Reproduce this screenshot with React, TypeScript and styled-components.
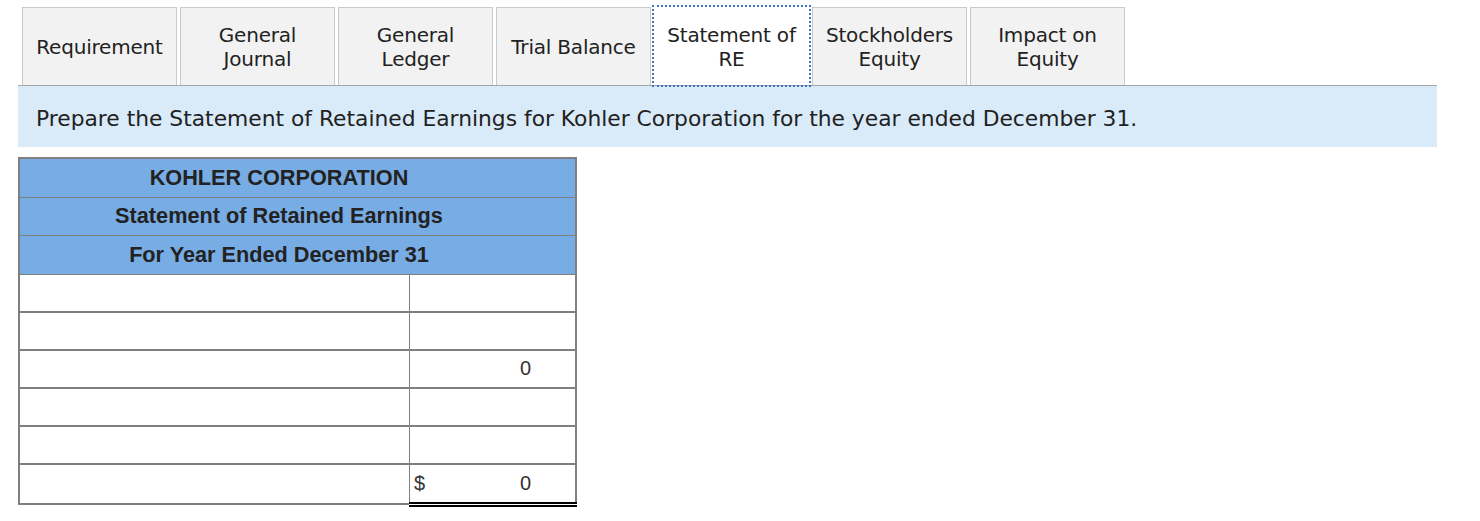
import React from "react";
import styled, { createGlobalStyle } from "styled-components";

const GlobalStyle = createGlobalStyle`
  html, body {
    margin: 0;
    padding: 0;
    background: #ffffff;
  }
  body {
    font-family: "DejaVu Sans", Verdana, sans-serif;
    color: #222;
  }
`;

const Page = styled.div`
  width: 1419px;
  padding: 5px 0 0 18px;
`;

const TabBar = styled.div`
  display: flex;
  gap: 3px;
  padding: 2px 0 0 4px;
  border-bottom: 1px solid #a6a6a6;
`;

const Tab = styled.div<{ active?: boolean }>`
  box-sizing: border-box;
  width: 155px;
  height: 78px;
  display: flex;
  align-items: center;
  justify-content: center;
  text-align: center;
  font-size: 20px;
  line-height: 24px;
  letter-spacing: -0.2px;
  color: #222;
  background: ${(p) => (p.active ? "#ffffff" : "#f2f2f2")};
  border: 1px solid ${(p) => (p.active ? "transparent" : "#c9c9c9")};
  border-bottom: none;
  outline: ${(p) => (p.active ? "2px dotted #3d74bd" : "none")};
  position: relative;
  z-index: ${(p) => (p.active ? 1 : 0)};
`;

const Instruction = styled.div`
  box-sizing: border-box;
  height: 61px;
  display: flex;
  align-items: center;
  padding: 4px 0 0 18px;
  background: #d9ebf9;
  font-size: 21.8px;
  color: #222;
`;

const Sheet = styled.table`
  margin-top: 10px;
  width: 559px;
  border-collapse: collapse;
  border: 2px solid #808080;
  border-bottom: none;
  font-family: "Liberation Sans", Arial, sans-serif;
`;

const HeadCell = styled.th`
  height: 37.5px;
  padding: 0 37px 0 0;
  background: #78ace4;
  border-bottom: 1px solid #7f7f7f;
  font-size: 21.7px;
  font-weight: bold;
  color: #222;
  text-align: center;
`;

const LabelCell = styled.td`
  height: 36.2px;
  width: 389px;
  padding: 0;
  border-bottom: 2px solid #808080;
  border-right: 1px solid #808080;
`;

const AmountCell = styled.td<{ total?: boolean; sum?: boolean }>`
  height: 36.2px;
  padding: 0 44px 0 4px;
  font-size: 20px;
  color: #333;
  border-top: ${(p) => (p.sum ? "2px solid #000" : "none")};
  border-bottom: ${(p) =>
    p.total ? "5px double #000" : "2px solid #808080"};
`;

const Amount = styled.div`
  display: flex;
  justify-content: space-between;
  align-items: center;
`;

type Row = { value?: string; dollar?: boolean; sum?: boolean; total?: boolean };

const rows: Row[] = [
  {},
  {},
  { value: "0", sum: true },
  {},
  {},
  { value: "0", dollar: true, sum: true, total: true },
];

const tabs = [
  ["Requirement"],
  ["General", "Journal"],
  ["General", "Ledger"],
  ["Trial Balance"],
  ["Statement of", "RE"],
  ["Stockholders", "Equity"],
  ["Impact on", "Equity"],
];

export default function App() {
  return (
    <>
      <GlobalStyle />
      <Page>
        <TabBar>
          {tabs.map((lines, i) => (
            <Tab key={i} active={i === 4}>
              <div>
                {lines.map((l, j) => (
                  <div key={j}>{l}</div>
                ))}
              </div>
            </Tab>
          ))}
        </TabBar>
        <Instruction>
          Prepare the Statement of Retained Earnings for Kohler Corporation for
          the year ended December 31.
        </Instruction>
        <Sheet>
          <thead>
            <tr>
              <HeadCell colSpan={2}>KOHLER CORPORATION</HeadCell>
            </tr>
            <tr>
              <HeadCell colSpan={2}>Statement of Retained Earnings</HeadCell>
            </tr>
            <tr>
              <HeadCell colSpan={2}>For Year Ended December 31</HeadCell>
            </tr>
          </thead>
          <tbody>
            {rows.map((r, i) => (
              <tr key={i}>
                <LabelCell />
                <AmountCell sum={r.sum} total={r.total}>
                  <Amount>
                    <span>{r.dollar ? "$" : ""}</span>
                    <span>{r.value ?? ""}</span>
                  </Amount>
                </AmountCell>
              </tr>
            ))}
          </tbody>
        </Sheet>
      </Page>
    </>
  );
}
